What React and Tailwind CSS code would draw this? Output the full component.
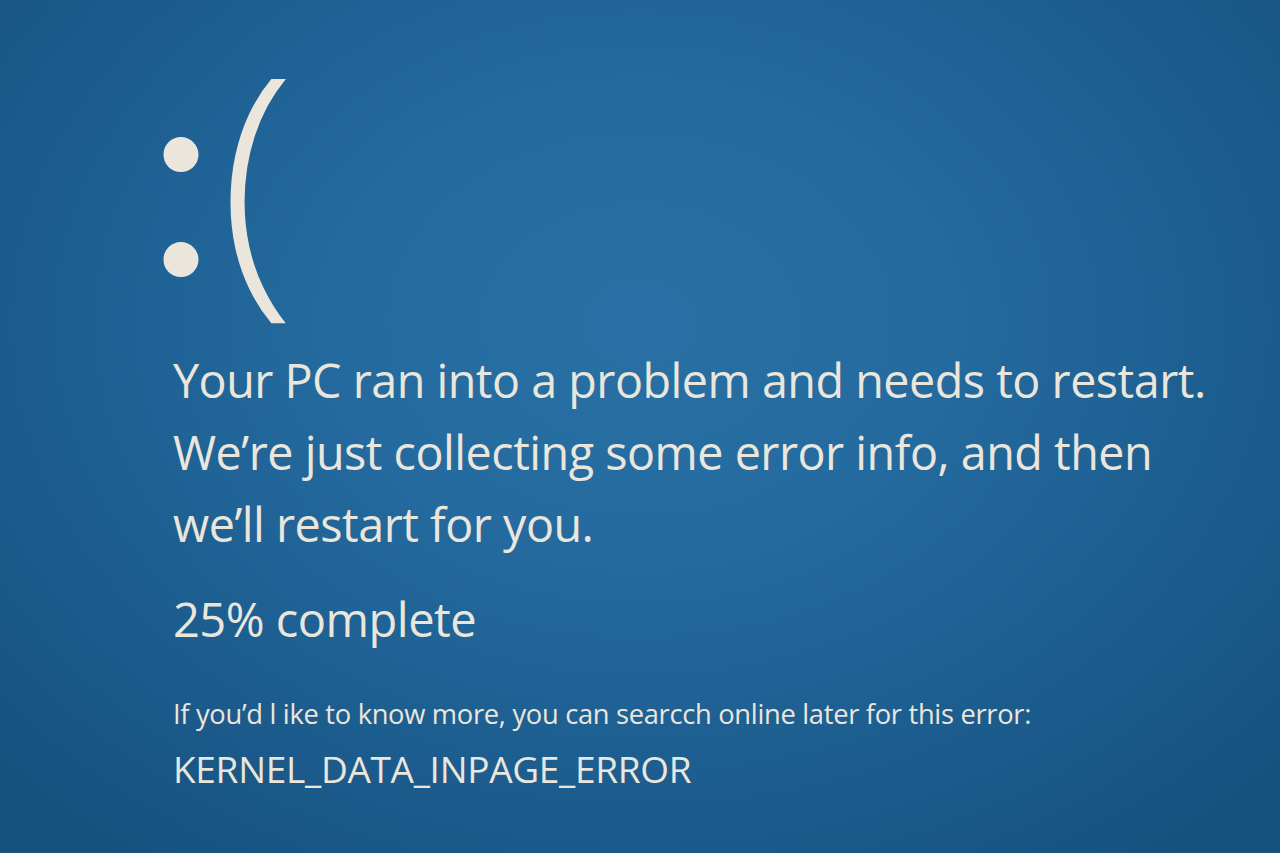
import React from "react";

function Face() {
  return (
    <div className="flex items-start h-[252px] -ml-[12px]">
      <span className="w-[73px] -ml-[15px] font-['Lato',sans-serif] font-normal text-[280px] leading-none mt-[-51px]">:</span>
      <span className="font-light text-[280px] leading-none mt-[-47px]">(</span>
    </div>
  );
}

export default function App() {
  return (
    <div className="w-[1280px] h-[853px] overflow-hidden bg-[radial-gradient(ellipse_70%_80%_at_50%_38%,#2870a5_0%,#246a9e_35%,#1d5e90_65%,#16507d_100%)] text-[#ebe6dc] font-['Open_Sans','Noto_Sans',sans-serif]">
      <div className="flex flex-col pl-[173px] pt-[78px]">
        <Face />
        <div className="mt-[14px] text-[46.7px] leading-[72px] tracking-[-0.5px]">
          <p>Your PC ran into a problem and needs to restart.</p>
          <p>We’re just collecting some error info, and then</p>
          <p>we’ll restart for you.</p>
        </div>
        <p className="mt-[29px] text-[47px] leading-[60px] tracking-[-0.5px]">25% complete</p>
        <p className="mt-[45px] text-[27.3px] leading-[40px] tracking-[-0.3px]">
          If you’d l ike to know more, you can searcch online later for this error:
        </p>
        <p className="mt-[11px] text-[37px] leading-[48px] tracking-[-0.3px]">KERNEL_DATA_INPAGE_ERROR</p>
      </div>
    </div>
  );
}
